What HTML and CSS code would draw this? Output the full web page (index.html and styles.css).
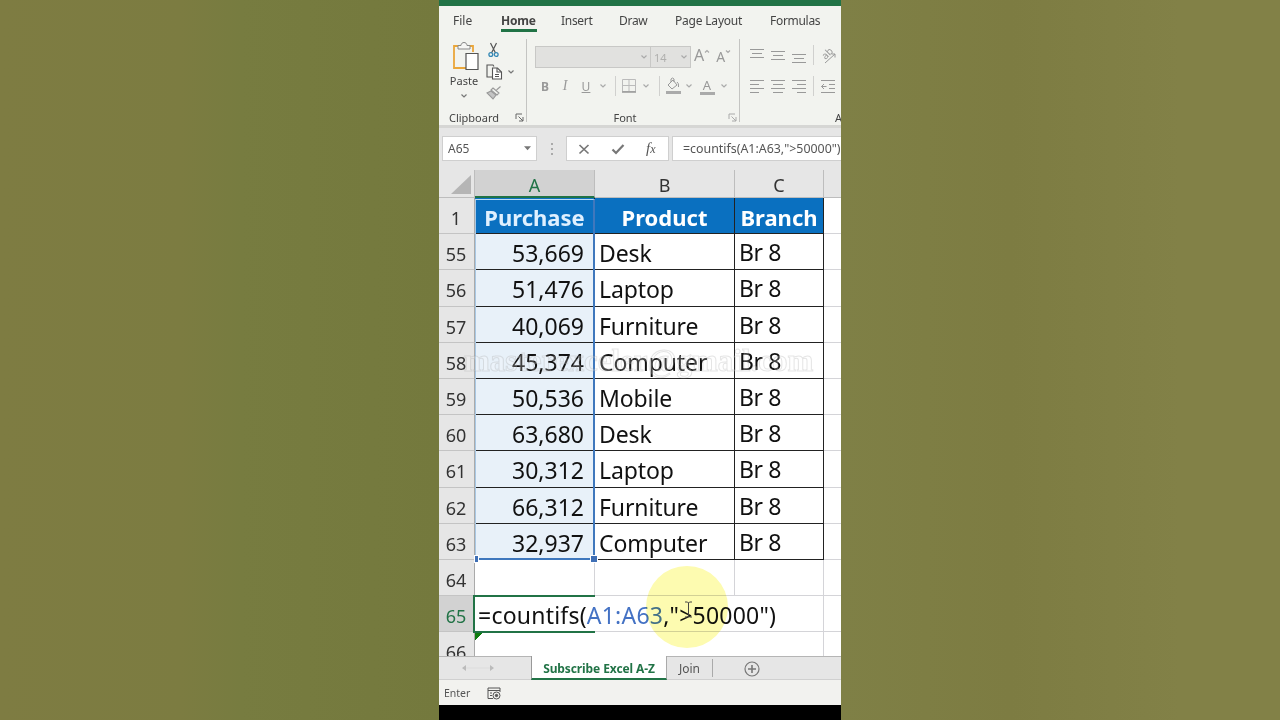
FILE: index.html
```
<!DOCTYPE html>
<html lang="en">
<head>
    <meta charset="UTF-8">
    <title>Excel COUNTIFS</title>
    <link rel="stylesheet" href="styles.css">
</head>
<body>
    <div class="window">
        <div class="title-bar"></div>

        <div class="tabs">
            <span class="tab file">File</span>
            <span class="tab home">Home</span>
            <span class="tab insert">Insert</span>
            <span class="tab draw">Draw</span>
            <span class="tab layout">Page Layout</span>
            <span class="tab formulas">Formulas</span>
        </div>

        <div class="ribbon">
            <div class="group clipboard">
                <div class="tools">
                    <div class="paste">
                        <svg width="28" height="31" viewBox="0 0 28 31" fill="none">
                            <path d="M7 5H2v22h12M16 5h5v6" stroke="#eaa63a" stroke-width="1.8"/>
                            <path d="M6 8V4.500h3c0-4 6-4 6 0h3V8z" fill="#f6f6f4" stroke="#888" stroke-width="1"/>
                            <path d="M14 12.500h12v16H14z" fill="#fff" stroke="#555" stroke-width="1.2"/>
                        </svg>
                        <span>Paste</span>
                        <svg class="caret" width="8" height="6" viewBox="0 0 8 6"><path d="M1.5 1.5L4 4l2.500-2.500"/></svg>
                    </div>
                    <div class="clip-icons">
                        <svg width="16" height="18" viewBox="0 0 16 18" fill="none">
                            <path d="M4.500 2l5 10M10.500 2l-5 10" stroke="#555" stroke-width="1.200"/>
                            <circle cx="4.800" cy="13.500" r="1.900" stroke="#3588b5" stroke-width="1.300"/>
                            <circle cx="10.200" cy="13.500" r="1.900" stroke="#3588b5" stroke-width="1.300"/>
                        </svg>
                        <div class="copy">
                            <svg width="17" height="18" viewBox="0 0 17 18" fill="none" stroke="#555" stroke-width="1.100">
                                <path d="M6 14H1V2h6l1 1.500"/>
                                <path d="M6.500 5h5l4 4v7h-9z" fill="#fff"/>
                                <path d="M11 5v4h4M9 11.500h4M9 13.500h4"/>
                            </svg>
                            <svg class="caret" width="8" height="6" viewBox="0 0 8 6"><path d="M1.500 1.500L4 4l2.500-2.500"/></svg>
                        </div>
                        <svg width="16" height="16" viewBox="0 0 16 16" fill="none" stroke="#999" stroke-width="1.100">
                            <path d="M14.500 1.500l-4 3.500M7 3l6 5-2 2-6-5z"/>
                            <path d="M5 6L1 8l6 6 3-4z" fill="#c4c4c4"/>
                        </svg>
                    </div>
                </div>
                <div class="group-label">Clipboard</div>
                <svg class="launcher" width="9" height="9" viewBox="0 0 9 9"><path d="M1 6V1h6M3.500 3.500L8 8M8 4v4H4"/></svg>
            </div>

            <div class="group font">
                <div class="font-row">
                    <div class="select family"><svg class="caret" width="8" height="6" viewBox="0 0 8 6"><path d="M1.500 1.500L4 4l2.500-2.500"/></svg></div>
                    <div class="select size">14<svg class="caret" width="8" height="6" viewBox="0 0 8 6"><path d="M1.500 1.500L4 4l2.500-2.500"/></svg></div>
                    <span class="grow">A<svg class="caret" width="6" height="5" viewBox="0 0 6 5"><path d="M1 3.500l2-2 2 2"/></svg></span>
                    <span class="shrink">A<svg class="caret" width="6" height="5" viewBox="0 0 6 5"><path d="M1 1.500l2 2 2-2"/></svg></span>
                </div>
                <div class="format-row">
                    <b>B</b>
                    <i class="italic">I</i>
                    <u>U</u>
                    <svg class="caret" width="8" height="6" viewBox="0 0 8 6"><path d="M1.500 1.500L4 4l2.500-2.500"/></svg>
                    <span class="divider"></span>
                    <svg width="16" height="16" viewBox="0 0 16 16" fill="none" stroke="#bbb"><path d="M1.500 1.500h13v12h-13zM8 1.500v12M1.500 7.500h13"/><path d="M1 14h14" stroke="#999" stroke-width="1.500"/></svg>
                    <svg class="caret" width="8" height="6" viewBox="0 0 8 6"><path d="M1.500 1.500L4 4l2.500-2.500"/></svg>
                    <span class="divider"></span>
                    <svg width="16" height="18" viewBox="0 0 16 18" fill="none" stroke="#999"><path d="M3 8l5-5 4 5-5 4zM6 5V2q1.500-2 3 0v3M12 5q2 1 1.500 5"/><path d="M1 15.500h15" stroke="#aaa" stroke-width="3"/></svg>
                    <svg class="caret" width="8" height="6" viewBox="0 0 8 6"><path d="M1.500 1.500L4 4l2.500-2.500"/></svg>
                    <span class="font-color">A</span>
                    <svg class="caret" width="8" height="6" viewBox="0 0 8 6"><path d="M1.500 1.500L4 4l2.500-2.500"/></svg>
                </div>
                <div class="group-label">Font</div>
                <svg class="launcher" width="9" height="9" viewBox="0 0 9 9"><path d="M1 6V1h6M3.500 3.500L8 8M8 4v4H4"/></svg>
            </div>

            <div class="group alignment">
                <div class="align-row">
                    <svg width="14" height="18" viewBox="0 0 14 18"><path d="M0 3.500h14M2 7.500h10M0 11.500h14"/></svg>
                    <svg width="14" height="18" viewBox="0 0 14 18"><path d="M0 5.500h14M2 9.500h10M0 13.500h14"/></svg>
                    <svg width="14" height="18" viewBox="0 0 14 18"><path d="M0 8.500h14M2 12.500h10M0 16.500h14"/></svg>
                    <span class="divider"></span>
                    <span class="orient"><span>ab</span><svg width="16" height="18" viewBox="0 0 16 18"><path d="M4 15L14 6M10.500 6H14v3.500"/></svg></span>
                </div>
                <div class="align-row second">
                    <svg width="14" height="18" viewBox="0 0 14 18"><path d="M0 3.500h14M0 7.500h9M0 11.500h14M0 15.500h9"/></svg>
                    <svg width="14" height="18" viewBox="0 0 14 18"><path d="M0 3.500h14M2 7.500h10M0 11.500h14M2 15.500h10"/></svg>
                    <svg width="14" height="18" viewBox="0 0 14 18"><path d="M0 3.500h14M5 7.500h9M0 11.500h14M5 15.500h9"/></svg>
                    <span class="divider"></span>
                    <svg width="14" height="18" viewBox="0 0 14 18"><path d="M0 3.500h14M8 7.500h6M8 11.500h6M0 15.500h14M0.500 9.500h5M3 7L0.500 9.500 3 12"/></svg>
                </div>
                <div class="group-label">A</div>
            </div>
        </div>

        <div class="formula-bar">
            <div class="name-box"><span>A65</span><svg width="7" height="5" viewBox="0 0 8 5"><path d="M0 0h8L4 4.500z" fill="#777"/></svg></div>
            <div class="dots"><i></i><i></i><i></i></div>
            <div class="fx-box">
                <svg width="12" height="12" viewBox="0 0 12 12"><path d="M1.500 2l9 8.500M10.500 2l-9 8.500" stroke="#777" stroke-width="1.700"/></svg>
                <svg width="14" height="12" viewBox="0 0 14 12"><path d="M1.500 6.500l3.500 3.500L12.500 2" stroke="#777" stroke-width="2.200" fill="none"/></svg>
                <span class="fx">f<small>x</small></span>
            </div>
            <div class="formula-input">=countifs(A1:A63,"&gt;50000")</div>
        </div>

        <div class="sheet">
            <div class="row letters">
                <div class="head corner"></div>
                <div class="head active">A</div>
                <div class="head">B</div>
                <div class="head">C</div>
                <div class="head"></div>
            </div>
            <div class="row titles">
                <div class="num">1</div><div class="cell a">Purchase</div><div class="cell b">Product</div><div class="cell c">Branch</div><div class="cell"></div>
            </div>
            <div class="row data"><div class="num">55</div><div class="cell a">53,669</div><div class="cell b">Desk</div><div class="cell c">Br 8</div><div class="cell"></div></div>
            <div class="row data"><div class="num">56</div><div class="cell a">51,476</div><div class="cell b">Laptop</div><div class="cell c">Br 8</div><div class="cell"></div></div>
            <div class="row data"><div class="num">57</div><div class="cell a">40,069</div><div class="cell b">Furniture</div><div class="cell c">Br 8</div><div class="cell"></div></div>
            <div class="row data"><div class="num">58</div><div class="cell a">45,374</div><div class="cell b">Computer</div><div class="cell c">Br 8</div><div class="cell"></div></div>
            <div class="row data"><div class="num">59</div><div class="cell a">50,536</div><div class="cell b">Mobile</div><div class="cell c">Br 8</div><div class="cell"></div></div>
            <div class="row data"><div class="num">60</div><div class="cell a">63,680</div><div class="cell b">Desk</div><div class="cell c">Br 8</div><div class="cell"></div></div>
            <div class="row data"><div class="num">61</div><div class="cell a">30,312</div><div class="cell b">Laptop</div><div class="cell c">Br 8</div><div class="cell"></div></div>
            <div class="row data"><div class="num">62</div><div class="cell a">66,312</div><div class="cell b">Furniture</div><div class="cell c">Br 8</div><div class="cell"></div></div>
            <div class="row data"><div class="num">63</div><div class="cell a">32,937</div><div class="cell b">Computer</div><div class="cell c">Br 8</div><div class="cell"></div></div>
            <div class="row"><div class="num">64</div><div class="cell"></div><div class="cell"></div><div class="cell"></div><div class="cell"></div></div>
            <div class="row editing"><div class="num">65</div><div class="cell edit"><span>=countifs(<em>A1:A63</em>,"&gt;50000")</span></div><div class="cell"></div></div>
            <div class="row"><div class="num">66</div><div class="cell error"></div><div class="cell blank"></div><div class="cell"></div><div class="cell"></div></div>

            <div class="range"></div>
            <div class="watermark">masterexceler@gmail.com</div>
            <div class="spotlight"></div>
            <svg class="cursor" width="9" height="17" viewBox="0 0 9 17"><path d="M1 1h2.500l1 1 1-1H8M4.500 2v13M1 16h2.500l1-1 1 1H8" fill="none" stroke="#444"/></svg>
        </div>

        <div class="sheet-tabs">
            <div class="nav">
                <svg width="32" height="8" viewBox="0 0 32 8"><path d="M4 1v6L0 4zM28 1v6l4-3z" fill="#bbb"/><path d="M4 4h24" stroke="#dcdcdc"/></svg>
            </div>
            <div class="sheet-tab current">Subscribe Excel A-Z</div>
            <div class="sheet-tab">Join</div>
            <svg width="16" height="16" viewBox="0 0 16 16" fill="none" stroke="#777"><circle cx="8" cy="8" r="7" stroke-width="1.200"/><path d="M8 4v8M4 8h8" stroke-width="1.600"/></svg>
        </div>

        <div class="status-bar">
            <span>Enter</span>
            <svg width="14" height="13" viewBox="0 0 14 13" fill="none" stroke="#555"><path d="M6 11.500H1V1h12v4M1 3.500h12M3 6h2M3 8.500h2"/><circle cx="9.500" cy="8.500" r="3.500"/><circle cx="9.500" cy="8.500" r="1.200" fill="#555"/></svg>
        </div>
    </div>
</body>
</html>
```

FILE: styles.css
```
*, *::before, *::after {
    box-sizing: border-box;
}
body {
    margin: 0;
    height: 720px;
    overflow: hidden;
    font-family: "Noto Sans", "Open Sans", sans-serif;
    background: linear-gradient(90deg, #7e7c42 0, #7c7c41 180px, #777c40 240px, #74793d 439px, #7f8046 841px, #7d7c42 1010px, #828147 1180px, #828147 100%);
}
.window {
    width: 402px;
    height: 720px;
    margin-left: 439px;
    background: #000;
    overflow: hidden;
    white-space: nowrap;
}
.title-bar {
    height: 6px;
    background: #217346;
}

/* ribbon */
.tabs {
    display: flex;
    height: 29px;
    padding-left: 14px;
    background: #f2f3ef;
    font-size: 12px;
    line-height: 30px;
    color: #444;
}
.tab {
    flex: none;
}
.file { width: 48px; }
.home {
    width: 36px;
    height: 26px;
    margin-right: 24px;
    font-weight: bold;
    letter-spacing: -0.2px;
    border-bottom: 3px solid #217346;
}
.insert { width: 58px; letter-spacing: -0.3px; }
.draw { width: 56px; letter-spacing: -0.3px; }
.layout { width: 95px; letter-spacing: -0.2px; }
.formulas { letter-spacing: -0.3px; }
.ribbon {
    display: flex;
    height: 93px;
    background: #f2f3ef;
    border-bottom: 3px solid #d6d6d4;
    color: #444;
}
.group {
    position: relative;
    flex: none;
    height: 90px;
}
.group::after {
    content: "";
    position: absolute;
    right: 1px;
    top: 4px;
    width: 1px;
    height: 83px;
    background: #c4c4c2;
}
.clipboard { width: 89px; }
.font { width: 213px; padding: 11px 0 0 7px; }
.alignment { width: 130px; padding: 10px 0 0 9px; }
.alignment::after {
    display: none;
}
.group-label {
    position: absolute;
    left: 0;
    right: 19px;
    bottom: -1px;
    text-align: center;
    font-size: 11px;
    line-height: 16px;
}
.alignment .group-label {
    left: 94px;
    text-align: left;
}
.launcher {
    position: absolute;
    right: 4px;
    bottom: 3px;
    fill: none;
    stroke: #666;
}
.font .launcher {
    stroke: #aaa;
}
.caret {
    flex: none;
    fill: none;
    stroke: #777;
    stroke-width: 1.2;
}
.font .caret {
    stroke: #aaa;
}
.tools {
    display: flex;
}
.paste {
    display: flex;
    flex-direction: column;
    align-items: center;
    width: 34px;
    margin-left: 8px;
    padding-top: 6px;
    font-size: 11px;
    line-height: 16px;
}
.paste span {
    margin: 1px 0 4px;
}
.paste > svg:first-child {
    margin-left: 3px;
}
.clip-icons {
    display: flex;
    flex-direction: column;
    margin-left: 5px;
    padding-top: 6px;
    gap: 4px;
}
.copy {
    display: flex;
    align-items: center;
    gap: 4px;
}
.font-row {
    display: flex;
    height: 22px;
    color: #999;
}
.select {
    display: flex;
    align-items: center;
    justify-content: flex-end;
    height: 22px;
    padding-right: 2px;
    border: 1px solid #c8c8c6;
    background: #e1e1df;
}
.family { width: 116px; }
.size {
    width: 41px;
    margin-left: -1px;
    padding-left: 3px;
    justify-content: space-between;
    font-size: 11px;
    color: #b0b0ae;
}
.grow, .shrink {
    display: flex;
    align-items: flex-start;
    margin-left: 3px;
    font-size: 16px;
    line-height: 19px;
}
.grow svg, .shrink svg {
    margin-top: 3px;
}
.shrink {
    margin-left: 6px;
    font-size: 14px;
    line-height: 21px;
}
.format-row {
    display: grid;
    grid-template-columns: 20px 20px 22px 12px 12px 16px 18px 8px 20px 12px 24px 10px;
    align-items: center;
    justify-items: center;
    height: 22px;
    margin-top: 7px;
    font-size: 12px;
    color: #999;
}
.italic {
    font-family: "Liberation Serif", serif;
    font-size: 14px;
}
.divider {
    width: 1px;
    height: 20px;
    background: #d0d0ce;
}
.font-color {
    width: 15px;
    border-bottom: 3px solid #aaa;
    font-size: 13px;
    line-height: 14px;
    text-align: center;
}
.align-row {
    display: grid;
    grid-template-columns: 14px 14px 14px 1px 16px;
    gap: 7px;
    align-items: center;
    height: 20px;
}
.align-row.second {
    margin-top: 11px;
}
.align-row svg {
    fill: none;
    stroke: #999;
}
.orient {
    position: relative;
    height: 18px;
    font-size: 10px;
    line-height: 14px;
    color: #999;
}
.orient span {
    display: inline-block;
    transform: rotate(-45deg);
}
.orient svg {
    position: absolute;
    left: 0;
    top: 2px;
}

/* formula bar */
.formula-bar {
    display: flex;
    height: 42px;
    padding: 8px 0 9px 3px;
    background: #e6e6e6;
    font-size: 12px;
    color: #555;
}
.name-box, .fx-box, .formula-input {
    display: flex;
    align-items: center;
    flex: none;
    height: 25px;
    background: #fff;
    border: 1px solid #cfcfcf;
}
.name-box {
    width: 95px;
    padding: 0 5px;
    justify-content: space-between;
    font-size: 12px;
}
.dots {
    display: flex;
    flex: none;
    flex-direction: column;
    align-items: center;
    justify-content: center;
    gap: 3px;
    width: 29px;
}
.dots i {
    width: 2px;
    height: 2px;
    background: #aaa;
}
.fx-box {
    width: 103px;
    padding-left: 11px;
    gap: 21px;
}
.fx {
    font: italic 15px "Liberation Serif", serif;
}
.fx small {
    font-size: 12px;
}
.formula-input {
    width: 180px;
    margin-left: 3px;
    padding-left: 10px;
    font-size: 12.400px;
}

/* grid */
.sheet {
    position: relative;
    height: 486px;
    background: #fff;
    overflow: hidden;
}
.row {
    display: grid;
    grid-template-columns: 36px 120px 140px 89px 17px;
    grid-template-rows: 100%;
    height: 36.200px;
    font-size: 23px;
    line-height: 36px;
    color: #111;
}
.letters {
    height: 28px;
    font-size: 18px;
    line-height: 31px;
    color: #333;
}
.head {
    background: #e6e6e6;
    border-right: 1px solid #bdbdbd;
    border-bottom: 1px solid #bdbdbd;
    text-align: center;
}
.head:last-child {
    border-right: none;
}
.active {
    background: #d2d2d2;
    border-bottom: 2px solid #217346;
    color: #217346;
}
.corner {
    padding: 5px 3px 3px 12px;
}
.corner::before {
    content: "";
    display: block;
    height: 19px;
    background: #b5b5b5;
    clip-path: polygon(100% 0, 100% 100%, 0 100%);
}
.num {
    background: #e6e6e6;
    border-right: 1px solid #aaa;
    border-bottom: 1px solid #c4c4c4;
    font-size: 18px;
    line-height: 41px;
    text-align: center;
    padding-right: 1px;
    color: #333;
}
.cell {
    border-right: 1px solid #d4d4d8;
    border-bottom: 1px solid #d4d4d8;
    min-width: 0;
}
.cell:last-child {
    border-right: none;
}
.titles .a, .titles .b, .titles .c {
    background: #0a70c0;
    border-color: #222;
    font-size: 22px;
    font-weight: bold;
    line-height: 38px;
    text-align: center;
    color: #fff;
}
.titles .a {
    color: #dff0ff;
}
.data .a, .data .b, .data .c {
    border-color: #222;
    line-height: 39px;
}
.data .a {
    padding-right: 10px;
    background: #e8f1f9;
    text-align: right;
}
.data .b {
    padding-left: 4px;
    letter-spacing: -0.1px;
}
.data .c {
    padding-left: 4px;
    line-height: 37px;
    letter-spacing: -0.4px;
}
.editing {
    grid-template-columns: 36px 349px 17px;
}
.editing .num {
    background: #d2d2d2;
    color: #217346;
}
.edit {
    position: relative;
    padding-left: 3px;
    line-height: 38px;
    letter-spacing: 0.22px;
}
.edit::before {
    content: "";
    position: absolute;
    left: -2px;
    top: -1px;
    width: 122px;
    height: 38px;
    border: 2px solid #217346;
    border-right: none;
}
.edit em {
    font-style: normal;
    color: #4472c4;
}
.error {
    background: linear-gradient(135deg, #107c10 6px, #fff 6px);
}
.error, .blank {
    border-right-color: #fff;
}
.range {
    position: absolute;
    left: 36px;
    top: 29px;
    width: 120px;
    height: 361px;
    border: 2px solid #3f78bd;
    border-left: 1px solid #a8c8e4;
    border-top: 1px solid #b9dcf5;
}
.range::before, .range::after {
    content: "";
    position: absolute;
    right: -5px;
    bottom: -5px;
    width: 8px;
    height: 8px;
    background: #3f6fb5;
    border: 1px solid #fff;
}
.range::before {
    right: auto;
    left: -2px;
    width: 5px;
}
.watermark {
    position: absolute;
    left: 25px;
    top: 173px;
    font: bold 31px/36px "Liberation Serif", serif;
    color: rgba(255, 255, 255, 0.2);
    -webkit-text-stroke: 1px rgba(150, 150, 150, 0.25);
}
.spotlight {
    position: absolute;
    left: 207px;
    top: 396px;
    width: 82px;
    height: 82px;
    border-radius: 50%;
    background: #fdfbb0;
    mix-blend-mode: multiply;
}
.cursor {
    position: absolute;
    left: 245px;
    top: 431px;
}

/* bottom bars */
.sheet-tabs {
    display: flex;
    align-items: center;
    height: 24px;
    background: #e6e6e6;
    border-top: 1px solid #b5b5b5;
    border-bottom: 1px solid #d0d0d0;
    font-size: 12px;
    color: #555;
}
.nav {
    display: flex;
    width: 92px;
    padding-left: 23px;
}
.sheet-tabs > svg {
    margin-top: 2px;
}
.sheet-tab {
    width: 46px;
    height: 18px;
    margin-right: 31px;
    line-height: 19px;
    text-align: center;
    border-right: 1px solid #aaa;
}
.current {
    width: 136px;
    height: 24px;
    margin: -1px 0 0;
    line-height: 26px;
    background: #fff;
    border-left: 1px solid #999;
    border-bottom: 2px solid #217346;
    font-weight: bold;
    font-size: 12px;
    letter-spacing: -0.1px;
    color: #217346;
}
.status-bar {
    display: flex;
    align-items: center;
    gap: 17px;
    height: 25px;
    padding: 1px 0 0 5px;
    background: #f2f2ef;
    font-size: 10.500px;
    color: #555;
}
```
